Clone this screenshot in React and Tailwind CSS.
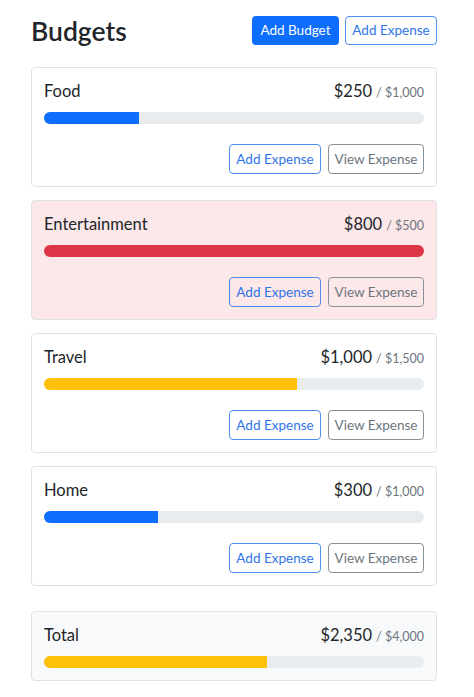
import React from "react";

const budgets = [
  { name: "Food", amount: 250, max: 1000 },
  { name: "Entertainment", amount: 800, max: 500 },
  { name: "Travel", amount: 1000, max: 1500 },
  { name: "Home", amount: 300, max: 1000 },
];

const fmt = (n) => "$" + n.toLocaleString("en-US");

const barColor = (amount, max) => {
  const r = amount / max;
  if (r < 0.5) return "bg-[#0d6efd]";
  if (r < 0.75) return "bg-[#ffc107]";
  return "bg-[#dc3545]";
};

const BudgetCard = ({ name, amount, max, gray, hideButtons }) => {
  const over = amount > max;
  const pct = Math.min(100, (amount / max) * 100);
  const bg = over ? "bg-[#fce7e9]" : gray ? "bg-[#f8f9fa]" : "bg-white";
  return (
    <div className={`${bg} border border-[#dfe2e5] rounded-[4px] px-[12px] pt-[13px] pb-[12px]`}>
      <div className="flex justify-between items-baseline h-[22px] leading-[20px] mb-[9px]">
        <span className="text-[16.5px] text-[#212529]">{name}</span>
        <span className="text-[16.5px] text-[#212529]">
          {fmt(amount)}
          <span className="text-[12.5px] text-[#6c757d] ml-[4px]">/ {fmt(max)}</span>
        </span>
      </div>
      <div className="h-[12px] w-full rounded-full bg-[#e9ecef] overflow-hidden">
        <div className={`h-full ${barColor(amount, max)}`} style={{ width: pct + "%" }} />
      </div>
      {!hideButtons && (
        <div className="flex justify-end gap-[7px] mt-[20px]">
          <button className="h-[30px] w-[92px] border border-[#4d8ef5] text-[#2f74e8] rounded-[4px] text-[13.5px]">Add Expense</button>
          <button className="h-[30px] w-[96px] border border-[#8a9097] text-[#6c757d] rounded-[4px] text-[13.5px]">View Expense</button>
        </div>
      )}
    </div>
  );
};

export default function App() {
  const total = budgets.reduce((s, b) => s + b.amount, 0);
  const totalMax = budgets.reduce((s, b) => s + b.max, 0);
  return (
    <div className="min-h-[697px] bg-white pl-[31px] pr-[37px] pt-[16px]" style={{ fontFamily: 'Lato, "Open Sans", sans-serif' }}>
      <div className="flex items-center h-[29px] mb-[22px]">
        <h1 className="text-[26.5px] font-semibold text-[#212529] leading-[28px]">Budgets</h1>
        <div className="ml-auto flex gap-[6px]">
          <button className="h-[29px] w-[87px] bg-[#0d6efd] text-white rounded-[4px] text-[13.5px]">Add Budget</button>
          <button className="h-[29px] w-[92px] border border-[#4d8ef5] text-[#2f74e8] rounded-[4px] text-[13.5px]">Add Expense</button>
        </div>
      </div>
      <div className="flex flex-col gap-[13px]">
        {budgets.map((b) => (
          <BudgetCard key={b.name} {...b} />
        ))}
      </div>
      <div className="mt-[25px]">
        <BudgetCard name="Total" amount={total} max={totalMax} gray hideButtons />
      </div>
    </div>
  );
}
